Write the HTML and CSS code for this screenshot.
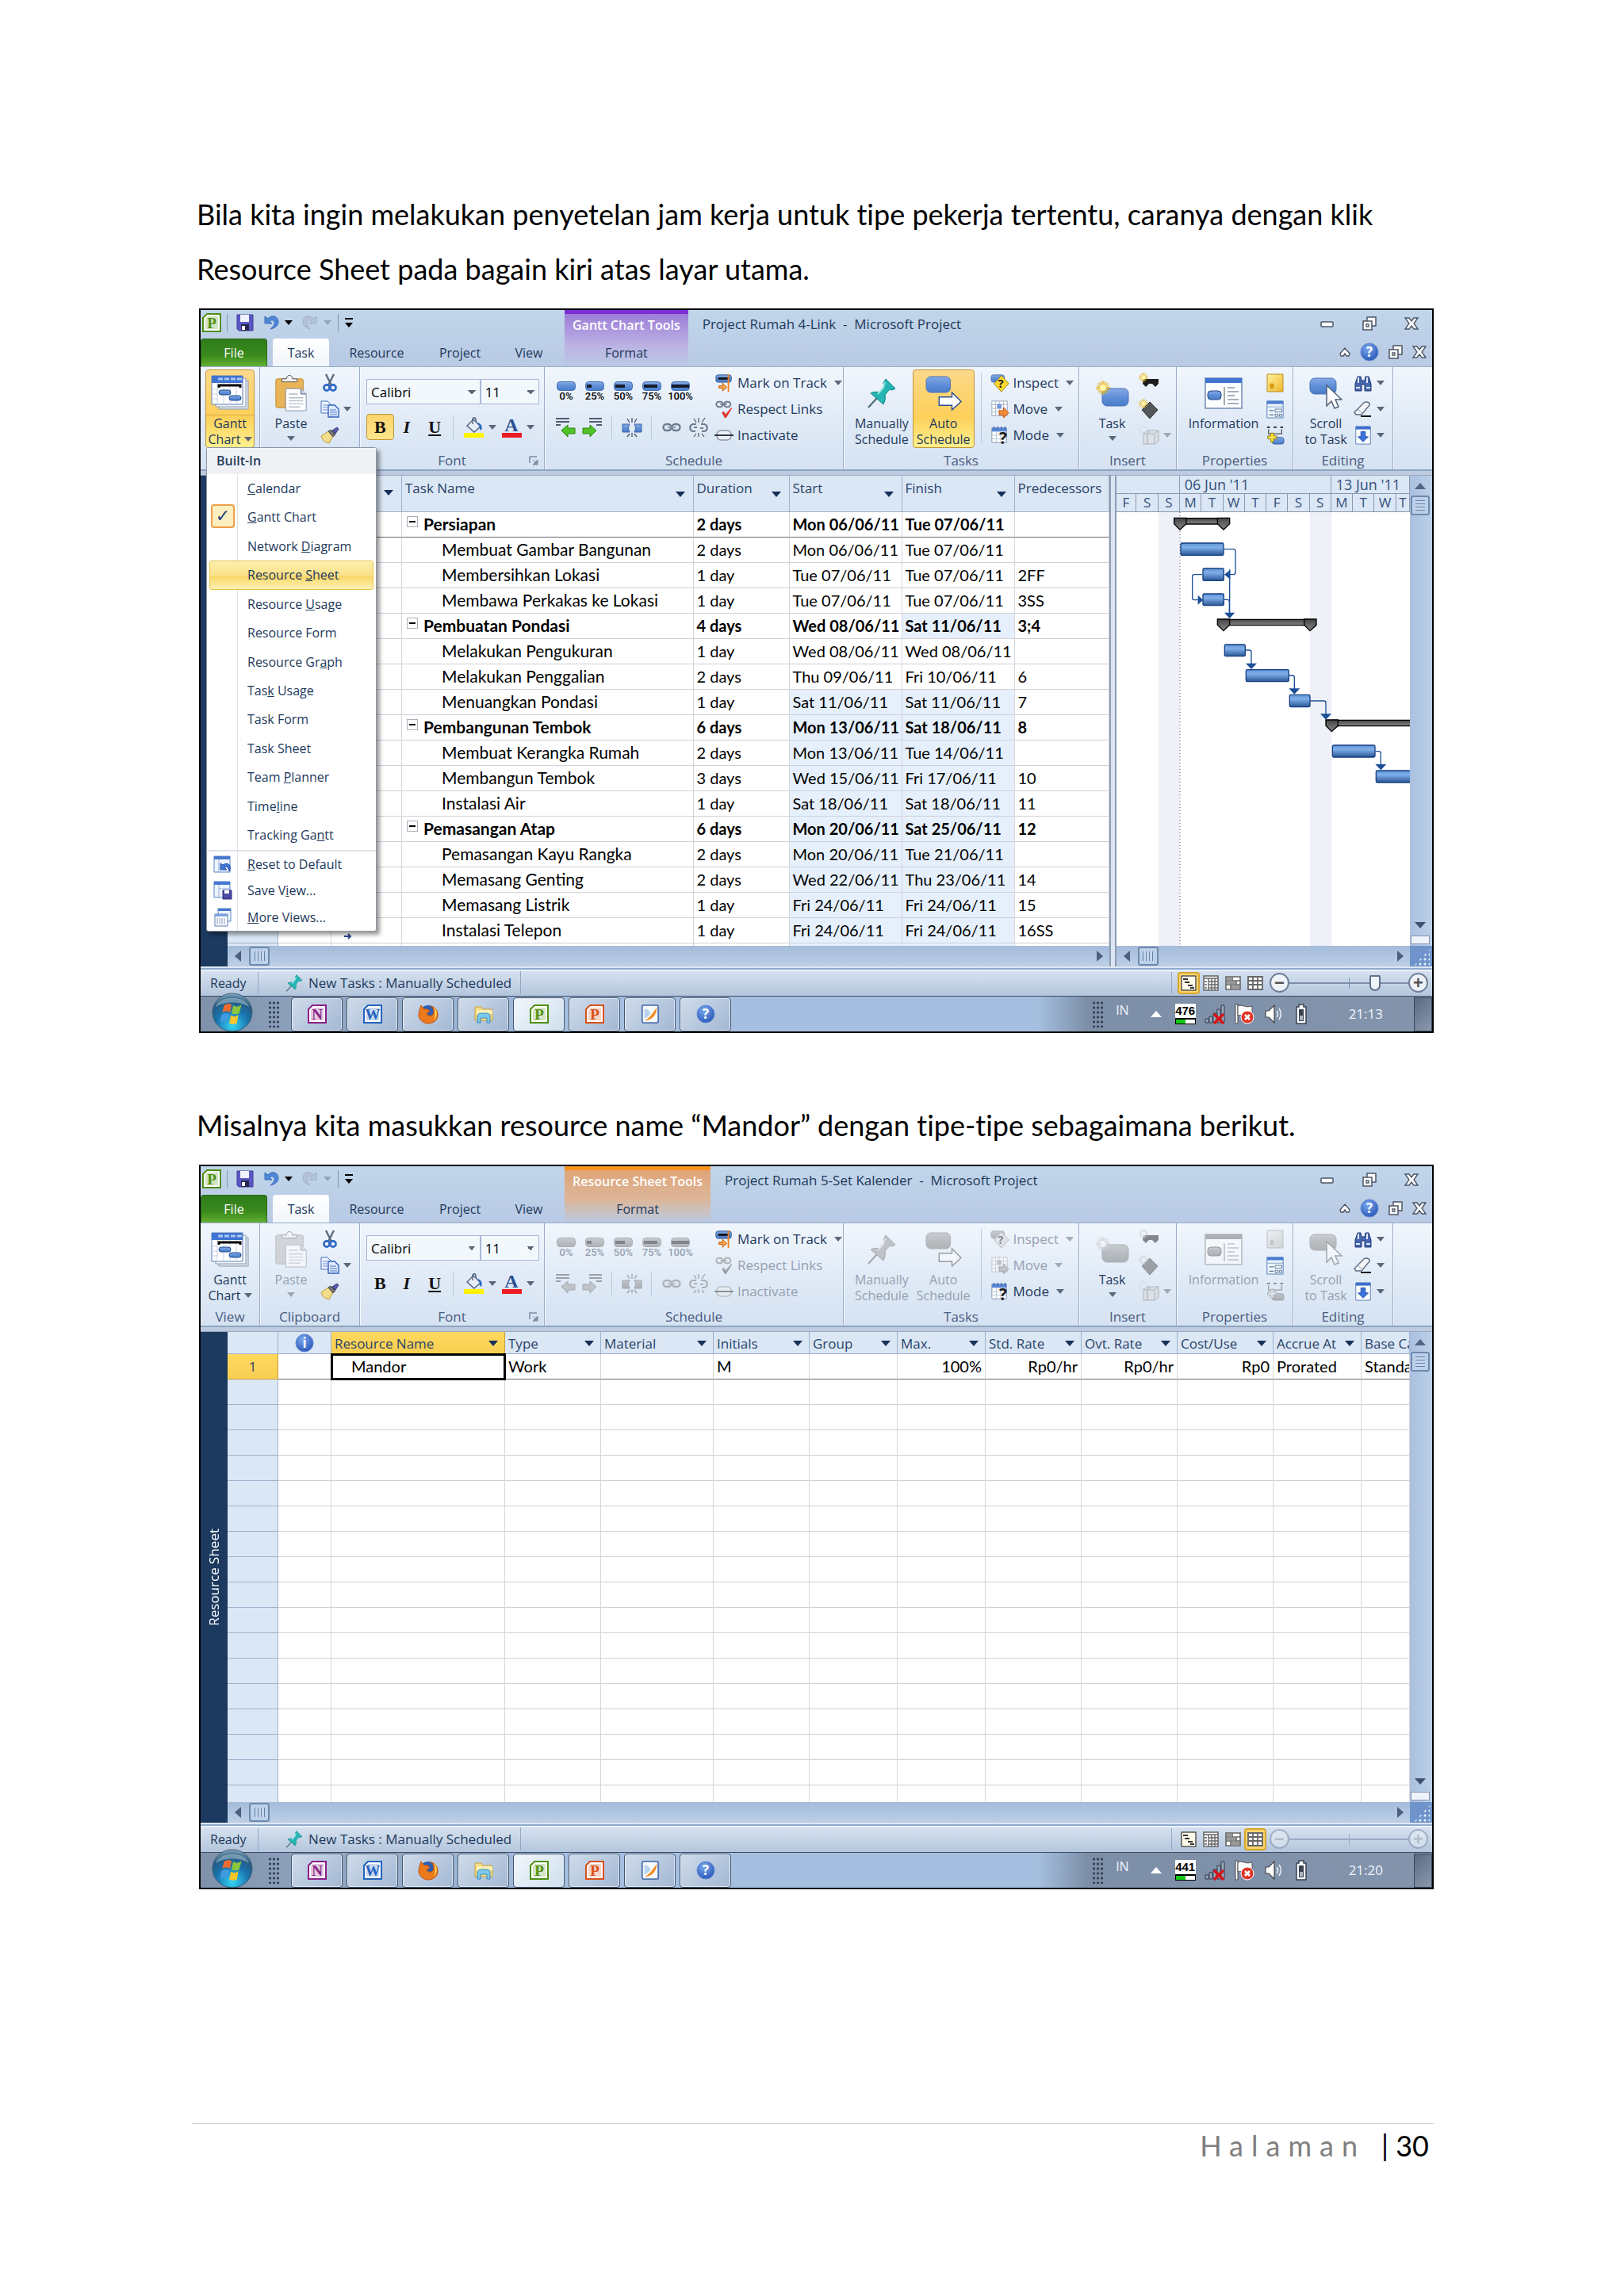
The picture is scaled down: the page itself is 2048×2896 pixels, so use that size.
FILE: index.html
```html
<!DOCTYPE html>
<html lang="id">
<head>
<meta charset="utf-8">
<meta name="viewport" content="width=device-width, initial-scale=1">
<title>Halaman 30</title>
<link rel="stylesheet" href="styles.css">
</head>
<body>
<svg class="sprite" aria-hidden="true">
  <defs>
    <linearGradient id="blue" x2="0" y2="1"><stop offset="0" stop-color="#86aae4"/><stop offset=".5" stop-color="#5f8fd8"/><stop offset="1" stop-color="#4a7cc8"/></linearGradient>
    <linearGradient id="bar" x2="0" y2="1"><stop offset="0" stop-color="#5d92d8"/><stop offset=".35" stop-color="#7fb0ea"/><stop offset="1" stop-color="#2a5596"/></linearGradient>
    <linearGradient id="dark" x2="0" y2="1"><stop offset="0" stop-color="#444"/><stop offset="1" stop-color="#888"/></linearGradient>
    <linearGradient id="gold" x2="1" y2="1"><stop offset="0" stop-color="#fff2a0"/><stop offset="1" stop-color="#efb52c"/></linearGradient>
    <radialGradient id="orb" cx=".5" cy=".85" r=".9"><stop offset="0" stop-color="#35d6f5"/><stop offset=".45" stop-color="#1a75b0"/><stop offset=".75" stop-color="#245a80"/><stop offset="1" stop-color="#a8c4d8"/></radialGradient>
    <radialGradient id="ball" cx=".4" cy=".3" r=".8"><stop offset="0" stop-color="#7aa8ee"/><stop offset="1" stop-color="#2350b4"/></radialGradient>
  </defs>
  <symbol id="frame" viewBox="0 0 24 24"><path d="M6 1h17v22H1V6z" fill="#fff" stroke="currentColor" stroke-width="2"/><path d="M7 4h13v16H4V7z" fill="currentColor" opacity=".25"/></symbol>
  <symbol id="save" viewBox="0 0 22 22"><path d="M1 1h20v20H3l-2-2z" fill="#5a57c4" stroke="#3d3a96"/><path d="M5 1h11v9H5z" fill="#f1f3fc"/><path d="M6 13h10v8H6z" fill="#26264e"/><path d="M7 15h4v5H7z" fill="#fff"/></symbol>
  <symbol id="undo" viewBox="0 0 20 20"><path d="M2 2v9h9L8 8c4-3 7 0 6 4-1 3-3 4-5 6 5-1 10-4 10-9 0-7-8-10-13-4z" fill="#4f86d8" stroke="#3a6cba"/></symbol>
  <symbol id="redo" viewBox="0 0 20 20"><path d="M18 2v9H9l3-3C8 5 5 8 6 12c1 3 3 4 4 6C6 17 1 14 1 9 1 2 9-1 14 5z" fill="#b4c3da" stroke="#9eb0ca"/></symbol>
  <symbol id="gantt" viewBox="0 0 48 44"><path d="M10 7h37v36H10z" fill="#dce4ee" stroke="#8c9ab0"/><path d="M6 4h38v36H6z" fill="#f4f7fb" stroke="#8c9ab0"/><path d="M1 1h39v36H1z" fill="#fff" stroke="#5d7fb8"/><path d="M1 1h39v9H1z" fill="#3f74d0"/><path d="M9 5h30" stroke="#a9c6f4" stroke-width="3" stroke-dasharray="6 2"/><path d="M8 10v27M1 18h7M1 24h7M1 30h7M16 10v27M24 10v27M32 10v27" stroke="#c4d2e8"/><path d="M10 16V13h27v3" fill="none" stroke="#000" stroke-width="3"/><rect x="10" y="19" width="15" height="6" rx="3" fill="url(#blue)" stroke="#204a8c"/><rect x="23" y="26" width="15" height="6" rx="3" fill="url(#blue)" stroke="#204a8c"/></symbol>
  <symbol id="paste" viewBox="0 0 42 48"><rect x="1" y="5" width="36" height="38" rx="2" fill="#e9b457" stroke="#c08a34"/><path d="M9 9V5h6c0-6 8-6 8 0h6v4z" fill="#f1f1f1" stroke="#555"/><path d="M14 18h20l7 7v22H14z" fill="#fff" stroke="#7f8fb0"/><path d="M34 18v7h7" fill="#c7d4ea" stroke="#4a5d88"/><path d="M18 25h12M18 30h19M18 34h19M18 38h19M18 42h15" stroke="#b4bccb" stroke-width="1.4"/></symbol>
  <symbol id="cut" viewBox="0 0 20 24"><path d="M5 1l7 14M15 1L8 15" stroke="#5a6a80" stroke-width="2.4" fill="none"/><circle cx="6" cy="18" r="3.6" fill="none" stroke="#2f68c4" stroke-width="2.6"/><circle cx="14" cy="18" r="3.6" fill="none" stroke="#2f68c4" stroke-width="2.6"/></symbol>
  <symbol id="copy" viewBox="0 0 24 22"><path d="M1 1h8l4 4v11H1z" fill="#eef4ff" stroke="#4470c0"/><path d="M3 6h6M3 9h6M3 12h6" stroke="#6b90d6"/><path d="M10 6h8l5 5v10H10z" fill="#dfeaff" stroke="#3260b8" stroke-width="1.4"/><path d="M12 12h8M12 15h9M12 18h9" stroke="#4876cc"/></symbol>
  <symbol id="brush" viewBox="0 0 24 22"><path d="M1 12l9-6 6 6-5 9C6 20 2 17 1 12z" fill="#f3dc8a" stroke="#b8963a"/><path d="M10 6l3-2 6 6-3 3z" fill="#777" stroke="#444"/><path d="M15 5l6-4 2 2-4 6z" fill="#5c5ca8" stroke="#3a3a80"/></symbol>
  <symbol id="fill" viewBox="0 0 26 26"><path d="M5 11l8-8 9 9-8 7z" fill="#e8eef6" stroke="#4d5f80" stroke-width="1.4"/><path d="M12 9V3c0-3 4-3 4 0v3" fill="none" stroke="#4d5f80" stroke-width="1.4"/><path d="M18 7c5 1 7 5 5 10-2-1-3-3-2-5z" fill="#2f68c4"/><path d="M1 20h25v6H1z" fill="#fff200"/></symbol>
  <symbol id="fontcolor" viewBox="0 0 26 26"><path d="M1 20h25v6H1z" fill="#ed1c24"/></symbol>
  <symbol id="pct" viewBox="0 0 24 12"><rect x=".5" y=".5" width="23" height="11" rx="4" fill="url(#blue)" stroke="#416cb0"/></symbol>
  <symbol id="outdent" viewBox="0 0 26 26"><path d="M1 2h17M1 6h17M1 10h6" stroke="#222c44" stroke-width="1.6"/><path d="M8 17l8-7v4h9v7h-9v4z" fill="#52c326" stroke="#2c8412"/></symbol>
  <symbol id="indent" viewBox="0 0 26 26"><path d="M9 2h16M9 6h16M18 10h7" stroke="#222c44" stroke-width="1.6"/><path d="M18 17l-8-7v4H1v7h9v4z" fill="#52c326" stroke="#2c8412"/></symbol>
  <symbol id="split" viewBox="0 0 26 26"><path d="M1 9h9l-2 5 2 5H1zM25 9h-9l2 5-2 5h9z" fill="url(#blue)" stroke="#3a66ac"/><path d="M13 1v6M7 2l3 5M19 2l-3 5M13 20v5M7 25l3-4M19 25l-3-4" stroke="#4a5468" stroke-width="1.3"/></symbol>
  <symbol id="link" viewBox="0 0 24 12"><rect x="1.500" y="2" width="10" height="8" rx="4" fill="none" stroke="#6f7d90" stroke-width="2.400"/><rect x="12.500" y="2" width="10" height="8" rx="4" fill="none" stroke="#6f7d90" stroke-width="2.400"/><path d="M7 6h10" stroke="#8b98aa" stroke-width="2"/></symbol>
  <symbol id="unlink" viewBox="0 0 24 26"><path d="M9 9H5c-5 1-5 8 0 9h3M15 9h4c5 1 5 8 0 9h-3M6 13h4M14 14h4" fill="none" stroke="#6f7d90" stroke-width="2.200"/><path d="M12 1v6M6 2l3 5M20 1l-4 6M12 20v5M6 25l3-4M19 25l-3-4" stroke="#4a5468" stroke-width="1.200"/></symbol>
  <symbol id="track" viewBox="0 0 24 26"><rect x="1" y="2" width="21" height="10" rx="3" fill="url(#blue)" stroke="#2f528c"/><path d="M4 7h15" stroke="#111" stroke-width="3"/><path d="M18 1v24" stroke="#ef7d1a" stroke-width="2"/><path d="M5 17h5v-4l6 6-6 5v-4H5z" fill="#f9a54a" stroke="#c85a0a"/></symbol>
  <symbol id="respect" viewBox="0 0 24 26"><rect x="1.500" y="3" width="9" height="7" rx="3.500" fill="none" stroke="#6f7d90" stroke-width="2"/><rect x="12" y="3" width="9" height="7" rx="3.500" fill="none" stroke="#6f7d90" stroke-width="2"/><path d="M7 6.500h9" stroke="#6f7d90" stroke-width="2"/><path d="M9 18l3-2 2 4 8-9 1 1-8 13h-2z" fill="#e0362a"/></symbol>
  <symbol id="inactive" viewBox="0 0 24 16"><rect x="3" y="2" width="18" height="12" rx="5" fill="#eef2f8" stroke="#8a94a6" stroke-width="1.500"/><path d="M0 8h24" stroke="#1c2432" stroke-width="1.800"/></symbol>
  <symbol id="pin" viewBox="0 0 36 38"><path d="M1 37l11-12" stroke="#46646e" stroke-width="2"/><path d="M23 1l12 12-4 2-3-1-6 7c1 4 0 8-2 12L4 19c4-2 8-2 11-1l6-7-1-5z" fill="#26b6b4" stroke="#0e8286"/><path d="M22 5l-2 7-7 8" fill="none" stroke="#8fe8e2" stroke-width="2"/></symbol>
  <symbol id="auto" viewBox="0 0 48 46"><rect x="1" y="1" width="32" height="21" rx="6" fill="url(#blue)" stroke="#5277b4"/><path d="M18 28h17v-6l12 12-12 11v-6H18z" fill="#fff" stroke="#2c4f98" stroke-width="1.500"/></symbol>
  <symbol id="inspect" viewBox="0 0 24 26"><rect x="0" y="2" width="18" height="10" rx="3" fill="url(#blue)" stroke="#5277b4"/><path d="M14 3l10 11-10 11L4 14z" fill="#ffd92e" stroke="#9d7b00"/></symbol>
  <symbol id="move" viewBox="0 0 24 26"><path d="M1 2h21v20H1z" fill="#fff" stroke="#98a4b8"/><path d="M1 7h21M1 12h21M1 17h21M6 2v20M11 2v20M17 2v20" stroke="#aab6ca"/><path d="M8 6h6v6H8z" fill="#6f98dc"/><path d="M11 15h6v-4l7 7-7 7v-4h-6z" fill="#f78a3a" stroke="#c2540a"/></symbol>
  <symbol id="mode" viewBox="0 0 24 26"><path d="M1 3h20v20H1z" fill="#fff" stroke="#8090aa"/><path d="M1 3h20v5H1z" fill="#5b88d8"/><path d="M4 1v4M9 1v4M14 1v4M19 1v4" stroke="#3b62ac" stroke-width="1.500"/><path d="M1 13h20M1 18h20M7 8v15M13 8v15" stroke="#b8c4d8"/></symbol>
  <symbol id="star" viewBox="0 0 18 18"><path d="M9 0v18M0 9h18M3 3l12 12M15 3L3 15M6 1l6 16M12 1L6 17M1 6l16 6M1 12l16-6" stroke="#e8b420" stroke-width="1.300"/><circle cx="9" cy="9" r="4" fill="#fff6a8"/></symbol>
  <symbol id="newtask" viewBox="0 0 42 34"><rect x="8" y="11" width="33" height="22" rx="6" fill="url(#blue)" stroke="#4a73b8"/><use href="#star" x="0" y="1" width="18" height="18"/></symbol>
  <symbol id="summary" viewBox="0 0 26 26"><path d="M6 8h19v6l-4 4-4-4H13l-4 4-4-4z" fill="#1c1c1c"/><use href="#star" x="0" y="0" width="12" height="12"/></symbol>
  <symbol id="milestone" viewBox="0 0 26 26"><path d="M14 4l10 10-10 11L4 14z" fill="#55565a" stroke="#333"/><use href="#star" x="0" y="0" width="12" height="12"/></symbol>
  <symbol id="deliver" viewBox="0 0 26 26"><path d="M6 11l5-4h14v13l-5 4H6zM6 11h14v13M20 11l5-4" fill="#d8dde4" stroke="#98a0ac" stroke-width="1.400"/><path d="M11 11v13M14 7l-3 4" stroke="#98a0ac" stroke-width="2"/><use href="#star" x="0" y="0" width="12" height="12" opacity=".5"/></symbol>
  <symbol id="info" viewBox="0 0 48 40"><path d="M1 1h46v38H1z" fill="#fdfeff" stroke="#7089b4" stroke-width="1.500"/><path d="M1 1h46v6H1z" fill="#3f74d0"/><rect x="4" y="17" width="17" height="11" rx="4" fill="url(#blue)" stroke="#24467e"/><path d="M25 12v23" stroke="#555"/><path d="M29 13h9M29 18h14M29 23h9M29 28h14M29 33h14" stroke="#8c97aa" stroke-width="1.500"/></symbol>
  <symbol id="note" viewBox="0 0 24 24"><path d="M2 1h20v22H2z" fill="url(#gold)" stroke="#b98d1c"/><path d="M5 14c5-4 7 1 5 5l-4 1z" fill="#d89a14"/></symbol>
  <symbol id="details" viewBox="0 0 24 26"><path d="M1 2h22v23H1z" fill="#eef5fc" stroke="#4f77b8"/><path d="M1 2h22v4H1z" fill="#4a7bd2"/><path d="M1 10h22" stroke="#7f9cc4"/><path d="M4 15h6M4 21h6" stroke="#5c7594" stroke-width="1.500"/><path d="M12 13h9v4h-9zM12 20h4v3h-4zM18 20h3v3h-3z" fill="none" stroke="#5c7594"/></symbol>
  <symbol id="timeline" viewBox="0 0 24 26"><path d="M1 2h22" stroke="#222" stroke-width="2" stroke-dasharray="4 5"/><path d="M3 5v6h18V5" fill="none" stroke="#555" stroke-width="1.400"/><rect x="8" y="16" width="16" height="9" rx="3" fill="url(#blue)" stroke="#34609e"/><path d="M6 10h4v4h4v4h-4v4H6v-4H2v-4h4z" fill="#ffe23c" stroke="#8c7410"/></symbol>
  <symbol id="scroll" viewBox="0 0 42 40"><rect x="1" y="1" width="33" height="20" rx="6" fill="url(#blue)" stroke="#4a73b8"/><path d="M22 10v26l6-6 4 9 5-2-4-9h8z" fill="#fff" stroke="#52607a" stroke-width="1.500"/></symbol>
  <symbol id="find" viewBox="0 0 24 24"><path d="M2 22v-9l3-9h4l1 5h4l1-5h4l3 9v9h-8v-8h-4v8z" fill="#4467b0" stroke="#20366e"/><path d="M3 18h5M16 18h5M6 5v7M17 5v7" stroke="#dfe8f8" stroke-width="2"/></symbol>
  <symbol id="erase" viewBox="0 0 24 22"><path d="M1 15L13 3c2-2 8-1 7 3L10 18H3z" fill="#f3f5f9" stroke="#5d6b82" stroke-width="1.400"/><path d="M5 11l7 6" stroke="#8d98aa"/><path d="M9 20h13" stroke="#111" stroke-width="2"/></symbol>
  <symbol id="down" viewBox="0 0 22 26"><path d="M1 1h20v24H1z" fill="#fff" stroke="#5579b6"/><path d="M1 1h20v4H1z" fill="#3e6fd0"/><path d="M8 8h6v7h4l-7 7-7-7h4z" fill="#3b72dc" stroke="#1e4aa8"/></symbol>
  <symbol id="launch" viewBox="0 0 12 12"><path d="M1 9V1h9" fill="none" stroke="#7d8ca6" stroke-width="1.500"/><path d="M5 5l4 4M11 5v6H5z" fill="#7d8ca6" stroke="#7d8ca6"/></symbol>
  <symbol id="min" viewBox="0 0 18 18"><rect x="1" y="7" width="15" height="6" rx="1" fill="#fff" stroke="#4c5666" stroke-width="1.500"/></symbol>
  <symbol id="restore" viewBox="0 0 18 18"><path d="M6 1h11v11H6z" fill="#fff" stroke="#4c5666" stroke-width="1.500"/><path d="M1 6h11v11H1z" fill="#fff" stroke="#4c5666" stroke-width="1.500"/><path d="M5 10h3v3H5z" fill="#fff" stroke="#4c5666" stroke-width="1.300"/></symbol>
  <symbol id="close" viewBox="0 0 18 16"><path d="M1 1h5l3 4 3-4h5l-5 7 5 7h-5l-3-4-3 4H1l5-7z" fill="#fff" stroke="#4c5666" stroke-width="1.400"/></symbol>
  <symbol id="up" viewBox="0 0 14 12"><path d="M1 8l6-7 6 7-1 3H9L7 8l-2 3H2z" fill="#fff" stroke="#4c5666" stroke-width="1.400"/></symbol>
  <symbol id="disc" viewBox="0 0 24 24"><circle cx="12" cy="12" r="11" fill="url(#ball)" stroke="#5d86d2"/></symbol>
  <symbol id="orbi" viewBox="0 0 54 52"><ellipse cx="27" cy="27" rx="26" ry="25" fill="url(#orb)" stroke="#3c5a74"/><path d="M16 18c4-3 7-3 10-1l-2 10c-3-2-6-2-10 0z" fill="#ee6a2c"/><path d="M28 18c4 2 7 2 11-1l-3 11c-4 2-7 2-10 0z" fill="#8cc63e"/><path d="M13 30c4-3 7-2 10 0l-2 10c-3-2-6-2-10 0z" fill="#3f9be0"/><path d="M25 31c4 2 7 2 10-1l-2 11c-4 2-7 2-10 0z" fill="#fcc52c"/><path d="M5 20C10 4 44 4 49 20 38 12 16 12 5 20z" fill="#fff" opacity=".35"/></symbol>
  <symbol id="fox" viewBox="0 0 26 26"><circle cx="13" cy="13" r="11" fill="#2b5fb4"/><path d="M2 8l2-6 4 5c3-1 6 0 7 3l-4 2c1 5 9 4 9-2 0-4-2-6-4-7 6 1 9 6 9 11 0 7-6 11-12 11S1 20 1 14z" fill="#ec7a1c" stroke="#c4520e"/><path d="M20 4c5 4 5 12 0 17 2-5 2-12 0-17z" fill="#ffd24a"/></symbol>
  <symbol id="folder" viewBox="0 0 26 26"><path d="M2 4h8l2 3h12v14H2z" fill="#f4dd84" stroke="#c4a040"/><path d="M4 8h20v5H4z" fill="#fbf1b8"/><path d="M5 24v-8c0-3 3-4 5-4h6c3 0 5 1 5 4v8h-4v-6H9v6z" fill="#7cc8ee" stroke="#3c88b8"/></symbol>
  <symbol id="swoosh" viewBox="0 0 24 26"><rect x="1" y="1" width="22" height="24" rx="2" fill="#f6f8fb" stroke="#4d75b0" stroke-width="2"/><path d="M4 22C12 18 15 12 21 4c0 10-6 17-17 18z" fill="#f08c1c"/><path d="M4 6c5 0 8 3 8 7-3 3-5 5-8 6z" fill="#b9d3ee"/></symbol>
  <symbol id="signal" viewBox="0 0 26 26"><path d="M1 19h4v5H1zM6 16h4v8H6zM11 12h4v12h-4zM16 7h4v17h-4zM21 2h4v22h-4z" fill="#9aa8bc" stroke="#2e3a4c"/><path d="M12 13l12 12M24 13L12 25" stroke="#d81418" stroke-width="3.500"/></symbol>
  <symbol id="flag" viewBox="0 0 26 26"><path d="M2 1h3v24H2z" fill="#fff" stroke="#444"/><path d="M5 3c6-3 8 3 18 0v12c-8 2-12-2-18 0z" fill="#fff" stroke="#555"/><circle cx="17" cy="17" r="8" fill="#e03428" stroke="#fff"/><path d="M14 14l6 6M20 14l-6 6" stroke="#fff" stroke-width="2.600"/></symbol>
  <symbol id="sound" viewBox="0 0 22 24"><path d="M2 8h4l7-7v22l-7-7H2z" fill="#fff" stroke="#444" stroke-width="1.200"/><path d="M16 8c2 2 2 6 0 8M19 5c3 4 3 10 0 14" fill="none" stroke="#e8eef6" stroke-width="1.600"/></symbol>
  <symbol id="battery" viewBox="0 0 16 26"><path d="M5 1h6v3h3v21H2V4h3z" fill="#fff" stroke="#39424f" stroke-width="1.500"/><path d="M5 7h6v15H5z" fill="#39424f"/><path d="M6 15h4v6H6z" fill="#aab4c2"/></symbol>
  <symbol id="v1" viewBox="0 0 20 20"><path d="M1 1h18v18H1z" fill="#fffbe8" stroke="#555" stroke-width="1.500"/><path d="M3 5h6M5 9h6M9 13h6M12 16h5" stroke="#333" stroke-width="2"/></symbol>
  <symbol id="v2" viewBox="0 0 20 20"><path d="M1 1h18v18H1z" fill="#fff" stroke="#666" stroke-width="1.500"/><path d="M1 4h18M7 8h12M7 12h12M7 16h12M7 4v15M11 4v15M15 4v15M2 8h3M2 12h3M2 16h3" stroke="#666" stroke-width="1.400"/></symbol>
  <symbol id="v3" viewBox="0 0 20 20"><path d="M1 2h18v16H1zM1 7h18M1 12h18M9 2v5M14 7v5M7 12v6" fill="#fff" stroke="#666" stroke-width="1.600"/><path d="M2 3h7v3H2zM2 8h11v3H2zM8 13h10v4H8z" fill="#999"/></symbol>
  <symbol id="v4" viewBox="0 0 20 20"><path d="M1 2h18v16H1zM1 7h18M1 12h18M7 2v16M13 2v16" fill="#fff" stroke="#666" stroke-width="1.800"/></symbol>
  <symbol id="m1" viewBox="0 0 24 22"><path d="M1 1h20v20H1z" fill="#eef4fc" stroke="#5b84c8"/><path d="M1 1h20v4H1z" fill="#4678d0"/><path d="M7 5v16" stroke="#8fb0e0"/><path d="M9 10v8h8l-3-3c3-2 5 0 6 5 4-6-1-13-8-8z" fill="#3f78d8" stroke="#2450a4"/></symbol>
  <symbol id="m2" viewBox="0 0 24 24"><path d="M1 1h20v20H1z" fill="#eef4fc" stroke="#5b84c8"/><path d="M1 1h20v4H1z" fill="#4678d0"/><path d="M7 5v16M7 10h14" stroke="#8fb0e0"/><path d="M12 12h11v11H12z" fill="#4a4aa4" stroke="#2f2f7c"/><path d="M14 12h6v4h-6z" fill="#fff"/></symbol>
  <symbol id="m3" viewBox="0 0 22 24"><path d="M5 1h16v16H5z" fill="#eef4fc" stroke="#5b84c8"/><path d="M5 1h16v3H5z" fill="#4678d0"/><path d="M1 8h16v15H1z" fill="#fff" stroke="#5b7cb4"/><path d="M1 8h16v3H1z" fill="#7fa2de"/><path d="M4 13v8M7 13v8M10 13v8M13 13v8" stroke="#8094b8"/></symbol>
</svg>

<main class="page">
<p class="text">Bila kita ingin melakukan penyetelan jam kerja untuk tipe pekerja tertentu, caranya dengan klik<br>Resource Sheet pada bagain kiri atas layar utama.</p>

<section class="window" aria-label="Project Rumah 4-Link">
  <header class="top">
    <div class="quick">
      <svg class="i24 green"><use href="#frame"/><text class="letter" x="12" y="19">P</text></svg><span class="bar"></span>
      <button aria-label="Save"><svg class="i22"><use href="#save"/></svg></button>
      <button class="pair" aria-label="Undo"><svg class="i20"><use href="#undo"/></svg><i class="caret black"></i></button>
      <button class="pair" aria-label="Redo"><svg class="i20"><use href="#redo"/></svg><i class="caret faint"></i></button><span class="bar"></span>
      <button class="more" aria-label="Customize"><i class="caret black"></i></button>
    </div>
    <nav class="tabs"><button class="file">File</button><button class="tab on">Task</button><button class="tab res">Resource</button><button class="tab prj">Project</button><button class="tab vw">View</button></nav>
    <div class="context purple-tab"><b>Gantt Chart Tools</b><button class="tab">Format</button></div>
    <div class="title"><h2>Project Rumah 4-Link&nbsp; -&nbsp; Microsoft Project</h2><span class="wincon"><button aria-label="Minimize"><svg class="i18"><use href="#min"/></svg></button><button aria-label="Restore"><svg class="i18"><use href="#restore"/></svg></button><button aria-label="Close"><svg class="i18"><use href="#close"/></svg></button></span></div>
    <div class="doccon"><button aria-label="Collapse ribbon"><svg class="i14"><use href="#up"/></svg></button><button aria-label="Help"><svg class="i24"><use href="#disc"/><text class="mark white" x="12" y="18">?</text></svg></button><button aria-label="Restore document"><svg class="i18"><use href="#restore"/></svg></button><button aria-label="Close document"><svg class="i18"><use href="#close"/></svg></button></div>
  </header>
  <div class="ribbon">
    <div class="group g-view"><div class="tools"><button class="big on split-btn"><span class="pic"><svg class="w48"><use href="#gantt"/></svg></span><span>Gantt<br>Chart<i class="caret"></i></span></button></div></div>
    <div class="group g-clip"><div class="tools"><button class="big"><span class="pic"><svg class="w42"><use href="#paste"/></svg></span><span>Paste</span><i class="caret"></i></button>
      <div class="stack"><button aria-label="Cut"><svg class="i24"><use href="#cut"/></svg></button><button aria-label="Copy"><svg class="i24"><use href="#copy"/></svg><i class="caret"></i></button><button aria-label="Format Painter"><svg class="i24"><use href="#brush"/></svg></button></div></div></div>
    <div class="group g-font"><div class="tools col"><div class="row combos"><select class="face" aria-label="Font"><option>Calibri</option></select><select class="size" aria-label="Font size"><option>11</option></select></div>
      <div class="row"><button class="fmt b on">B</button><button class="fmt it">I</button><button class="fmt u">U</button><span class="bar"></span><button class="color" aria-label="Background color"><svg class="i26"><use href="#fill"/></svg><i class="caret"></i></button><button class="color" aria-label="Font color"><svg class="i26"><use href="#fontcolor"/><text class="glyph" x="13" y="18">A</text></svg><i class="caret"></i></button></div></div><h3>Font</h3><button class="launcher" aria-label="Font dialog"><svg class="i12"><use href="#launch"/></svg></button></div>
    <div class="group g-sched"><div class="tools"><div class="col"><div class="row combos">
      <button class="pct"><svg><use href="#pct"/></svg>0%</button><button class="pct"><svg><use href="#pct"/><path class="prog" d="M2 6h6"/></svg>25%</button><button class="pct"><svg><use href="#pct"/><path class="prog" d="M2 6h12"/></svg>50%</button><button class="pct"><svg><use href="#pct"/><path class="prog" d="M2 6h17"/></svg>75%</button><button class="pct"><svg><use href="#pct"/><path class="prog" d="M1 6h22"/></svg>100%</button></div>
      <div class="row icons"><button aria-label="Outdent"><svg class="i26"><use href="#outdent"/></svg></button><button aria-label="Indent"><svg class="i26"><use href="#indent"/></svg></button><span class="bar"></span><button aria-label="Split Task"><svg class="i26"><use href="#split"/></svg></button><span class="bar"></span><button aria-label="Link"><svg class="i24"><use href="#link"/></svg></button><button aria-label="Unlink"><svg class="i26"><use href="#unlink"/></svg></button></div></div>
      <div class="stack wide"><button><svg class="i24"><use href="#track"/></svg>Mark on Track<i class="caret"></i></button><button><svg class="i24"><use href="#respect"/></svg>Respect Links</button><button><svg class="i24"><use href="#inactive"/></svg>Inactivate</button></div></div><h3>Schedule</h3></div>
    <div class="group g-tasks"><div class="tools"><button class="big"><span class="pic"><svg class="w36"><use href="#pin"/></svg></span><span>Manually<br>Schedule</span></button><button class="big on"><span class="pic"><svg class="w48"><use href="#auto"/></svg></span><span>Auto<br>Schedule</span></button><span class="bar tall"></span>
      <div class="stack wide"><button><svg class="i24"><use href="#inspect"/><text class="mark" x="13" y="18">?</text></svg>Inspect<i class="caret"></i></button><button><svg class="i24"><use href="#move"/></svg>Move<i class="caret"></i></button><button><svg class="i24"><use href="#mode"/><text class="mark large" x="16" y="23">?</text></svg>Mode<i class="caret"></i></button></div></div><h3>Tasks</h3></div>
    <div class="group g-insert"><div class="tools"><button class="big"><span class="pic"><svg class="w42"><use href="#newtask"/></svg></span><span>Task</span><i class="caret"></i></button>
      <div class="stack"><button aria-label="Summary"><svg class="i26"><use href="#summary"/></svg></button><button aria-label="Milestone"><svg class="i26"><use href="#milestone"/></svg></button><button aria-label="Deliverable" disabled><svg class="i26"><use href="#deliver"/></svg><i class="caret"></i></button></div></div><h3>Insert</h3></div>
    <div class="group g-prop"><div class="tools"><button class="big"><span class="pic"><svg class="w48"><use href="#info"/></svg></span><span>Information</span></button>
      <div class="stack"><button aria-label="Notes"><svg class="i24"><use href="#note"/></svg></button><button aria-label="Details"><svg class="i24"><use href="#details"/></svg></button><button aria-label="Add to Timeline"><svg class="i24"><use href="#timeline"/></svg></button></div></div><h3>Properties</h3></div>
    <div class="group g-edit"><div class="tools"><button class="big"><span class="pic"><svg class="w42"><use href="#scroll"/></svg></span><span>Scroll<br>to Task</span></button>
      <div class="stack"><button aria-label="Find"><svg class="i24"><use href="#find"/></svg><i class="caret"></i></button><button aria-label="Clear"><svg class="i24"><use href="#erase"/></svg><i class="caret"></i></button><button aria-label="Fill"><svg class="i24"><use href="#down"/></svg><i class="caret"></i></button></div></div><h3>Editing</h3></div>
  </div>
  <div class="band"></div>
  <div class="work gantt-work">
    <div class="side"></div>
    <div class="pane">
      <table class="tasks">
        <colgroup><col class="c63"><col class="c68"><col class="c88"><col><col class="c121"><col class="c142"><col class="c142"><col class="c119"></colgroup>
        <thead><tr><th></th><th></th><th><div><span></span><i class="caret navy"></i></div></th><th><div>Task Name<i class="caret navy"></i></div></th><th><div>Duration<i class="caret navy"></i></div></th><th><div>Start<i class="caret navy"></i></div></th><th><div>Finish<i class="caret navy"></i></div></th><th><div>Predecessors</div></th></tr></thead>
        <tbody>
        <tr class="sum first"><th><td><td><td><button class="tog" aria-label="Collapse"></button>Persiapan<td>2 days<td>Mon 06/06/11<td>Tue 07/06/11<td></tr>
        <tr><th><td><td><td>Membuat Gambar Bangunan<td>2 days<td>Mon 06/06/11<td>Tue 07/06/11<td></tr>
        <tr><th><td><td><td>Membersihkan Lokasi<td>1 day<td>Tue 07/06/11<td>Tue 07/06/11<td>2FF</tr>
        <tr><th><td><td><td>Membawa Perkakas ke Lokasi<td>1 day<td>Tue 07/06/11<td>Tue 07/06/11<td>3SS</tr>
        <tr class="sum"><th><td><td><td><button class="tog" aria-label="Collapse"></button>Pembuatan Pondasi<td>4 days<td>Wed 08/06/11<td class="ch">Sat 11/06/11<td>3;4</tr>
        <tr><th><td><td><td>Melakukan Pengukuran<td>1 day<td>Wed 08/06/11<td>Wed 08/06/11<td></tr>
        <tr><th><td><td><td>Melakukan Penggalian<td>2 days<td>Thu 09/06/11<td>Fri 10/06/11<td>6</tr>
        <tr><th><td><td><td>Menuangkan Pondasi<td>1 day<td class="ch">Sat 11/06/11<td class="ch">Sat 11/06/11<td>7</tr>
        <tr class="sum"><th><td><td><td><button class="tog" aria-label="Collapse"></button>Pembangunan Tembok<td>6 days<td class="ch">Mon 13/06/11<td class="ch">Sat 18/06/11<td>8</tr>
        <tr><th><td><td><td>Membuat Kerangka Rumah<td>2 days<td class="ch">Mon 13/06/11<td class="ch">Tue 14/06/11<td></tr>
        <tr><th><td><td><td>Membangun Tembok<td>3 days<td class="ch">Wed 15/06/11<td class="ch">Fri 17/06/11<td>10</tr>
        <tr><th><td><td><td>Instalasi Air<td>1 day<td class="ch">Sat 18/06/11<td class="ch">Sat 18/06/11<td>11</tr>
        <tr class="sum"><th><td><td><td><button class="tog" aria-label="Collapse"></button>Pemasangan Atap<td>6 days<td class="ch">Mon 20/06/11<td class="ch">Sat 25/06/11<td>12</tr>
        <tr><th><td><td><td>Pemasangan Kayu Rangka<td>2 days<td class="ch">Mon 20/06/11<td class="ch">Tue 21/06/11<td></tr>
        <tr><th><td><td><td>Memasang Genting<td>2 days<td class="ch">Wed 22/06/11<td class="ch">Thu 23/06/11<td>14</tr>
        <tr><th><td><td><td>Memasang Listrik<td>1 day<td class="ch">Fri 24/06/11<td class="ch">Fri 24/06/11<td>15</tr>
        <tr><th><td><td class="modecell"><svg class="i20" viewBox="0 0 20 20"><path d="M6 14h8M11 11l3 3-3 3" fill="none" stroke="#2c4a8c" stroke-width="2"/></svg><td>Instalasi Telepon<td>1 day<td class="ch">Fri 24/06/11<td class="ch">Fri 24/06/11<td>16SS</tr>
        <tr><th><td><td><td><td><td class="ch"><td class="ch"><td></tr>
        </tbody>
      </table>
    </div>
    <div class="splitter"></div>
    <div class="chart">
      <div class="weeks"><span></span><span>06 Jun '11</span><span>13 Jun '11</span></div>
      <div class="days"><span>F</span><span>S</span><span>S</span><span>M</span><span>T</span><span>W</span><span>T</span><span>F</span><span>S</span><span>S</span><span>M</span><span>T</span><span>W</span><span>T</span></div>
      <svg class="bars" viewBox="52 170 1112 1641" preserveAspectRatio="xMinYMin slice" role="img" aria-label="Gantt bars">
        <path d="M211 170h82v1641h-82zM784 170h82v1641h-82z" fill="#eff1f8"/>
        <path d="M292 170v1641" stroke="#555" stroke-width="3" stroke-dasharray="3 9"/>
        <g fill="url(#dark)" stroke="#000" stroke-width="4">
          <path d="M292 193h165v22H292z"/><path d="M270 192h46v22l-24 22-22-22zM434 192h46v22l-23 22-23-22z"/>
          <path d="M457 576h327v22H457z"/><path d="M434 575h46v22l-23 22-23-22zM762 575h46v22l-24 22-22-22z"/>
          <path d="M866 957h330v22H866z"/><path d="M844 956h46v22l-24 22-22-22z"/>
        </g>
        <g fill="url(#bar)" stroke="#163f80" stroke-width="4">
          <rect x="295" y="287" width="162" height="46" rx="5"/><rect x="379" y="383" width="79" height="46" rx="5"/><rect x="379" y="479" width="79" height="44" rx="5"/>
          <rect x="461" y="671" width="78" height="44" rx="5"/><rect x="542" y="766" width="162" height="45" rx="5"/><rect x="707" y="861" width="77" height="46" rx="5"/>
          <rect x="869" y="1052" width="161" height="45" rx="5"/><rect x="1034" y="1148" width="200" height="45" rx="5"/>
        </g>
        <g fill="none" stroke="#1c4f98" stroke-width="4">
          <path d="M459 310h35q8 0 8 8v80q0 8-8 8h-14M377 406h-30q-8 0-8 8v80q0 8 8 8h20M459 501h12q8 0 8 8v44M480 387v170M541 692h13q8 0 8 8v46M706 788h11q8 0 8 8v44M786 884h50q8 0 8 8v44M1032 1075h12q8 0 8 8v44"/>
        </g>
        <path d="M482 388v36l-22-18zM360 484v36l20-18zM460 550h40l-20 22zM541 742h42l-21 22zM704 837h42l-21 22zM823 933h42l-21 22zM1031 1124h42l-21 22z" fill="#1c4f98"/>
      </svg>
    </div>
    <div class="vscroll"><i class="tri up"></i><i class="thumb v"></i><i class="tri dn"></i><i class="knob"></i></div>
    <div class="hscroll left"><i class="tri lf"></i><i class="thumb h"></i><i class="tri rt"></i></div>
    <div class="splitter low"></div>
    <div class="hscroll"><i class="tri lf"></i><i class="thumb h"></i><i class="tri rt"></i></div>
    <div class="corner"></div>
  </div>
  <div class="menu" role="menu">
    <h4>Built-In</h4>
    <div class="list">
      <button role="menuitem"><span><u>C</u>alendar</span></button><button role="menuitem"><i class="tick">✓</i><span><u>G</u>antt Chart</span></button><button role="menuitem"><span>Network <u>D</u>iagram</span></button><button role="menuitem" class="hot"><span>Resource <u>S</u>heet</span></button><button role="menuitem"><span>Resource <u>U</u>sage</span></button><button role="menuitem"><span>Resource Form</span></button><button role="menuitem"><span>Resource Gr<u>a</u>ph</span></button><button role="menuitem"><span>Tas<u>k</u> Usage</span></button><button role="menuitem"><span>Task Form</span></button><button role="menuitem"><span>Task Sheet</span></button><button role="menuitem"><span>Team <u>P</u>lanner</span></button><button role="menuitem"><span>Time<u>l</u>ine</span></button><button role="menuitem"><span>Tracking Ga<u>n</u>tt</span></button>
    </div>
    <div class="list short">
      <button role="menuitem"><svg class="i24"><use href="#m1"/></svg><span><u>R</u>eset to Default</span></button><button role="menuitem"><svg class="i24"><use href="#m2"/></svg><span>Save V<u>i</u>ew...</span></button><button role="menuitem"><svg class="i24"><use href="#m3"/></svg><span><u>M</u>ore Views...</span></button>
    </div>
  </div>
  <div class="edge"></div>
  <footer class="status"><span class="ready">Ready</span><span class="newtasks"><svg class="i22"><use href="#pin"/></svg>New Tasks : Manually Scheduled<span class="rule"></span></span><span class="views"><button class="on" aria-label="Gantt view"><svg class="i20"><use href="#v1"/></svg></button><button aria-label="Usage view"><svg class="i20"><use href="#v2"/></svg></button><button aria-label="Planner view"><svg class="i20"><use href="#v3"/></svg></button><button aria-label="Sheet view"><svg class="i20"><use href="#v4"/></svg></button></span><span class="zoom"><button class="round" aria-label="Zoom out">−</button><input type="range" aria-label="Zoom" min="0" max="100" value="74"><button class="round" aria-label="Zoom in">+</button></span></footer>
  <div class="taskbar">
    <button class="start" aria-label="Start"><svg><use href="#orbi"/></svg></button><span class="grip"></span>
    <div class="apps"><button aria-label="OneNote"><svg class="i24 purple"><use href="#frame"/><text class="letter" x="12" y="19">N</text></svg></button><button aria-label="Word"><svg class="i24 blue"><use href="#frame"/><text class="letter" x="12" y="19">W</text></svg></button><button aria-label="Firefox"><svg class="i26"><use href="#fox"/></svg></button><button aria-label="Explorer"><svg class="i26"><use href="#folder"/></svg></button><button class="cur" aria-label="Project"><svg class="i24 green"><use href="#frame"/><text class="letter" x="12" y="19">P</text></svg></button><button aria-label="PowerPoint"><svg class="i24 orange"><use href="#frame"/><text class="letter" x="12" y="19">P</text></svg></button><button aria-label="Viewer"><svg class="i24"><use href="#swoosh"/></svg></button><button aria-label="Help"><svg class="i24"><use href="#disc"/><text class="mark white" x="12" y="18">?</text></svg></button></div>
    <div class="tray"><span class="grip"></span><span class="lang">IN</span><i class="tri up white"></i><span class="meter">476</span><svg class="i26"><use href="#signal"/></svg><svg class="i26"><use href="#flag"/></svg><svg class="i24"><use href="#sound"/></svg><svg class="i26"><use href="#battery"/></svg><time>21:13</time><button class="peek" aria-label="Show desktop"></button></div>
  </div>
</section>

<p class="text second">Misalnya kita masukkan resource name “Mandor” dengan tipe-tipe sebagaimana berikut.</p>

<section class="window" aria-label="Project Rumah 5-Set Kalender">
  <header class="top">
    <div class="quick">
      <svg class="i24 green"><use href="#frame"/><text class="letter" x="12" y="19">P</text></svg><span class="bar"></span>
      <button aria-label="Save"><svg class="i22"><use href="#save"/></svg></button>
      <button class="pair" aria-label="Undo"><svg class="i20"><use href="#undo"/></svg><i class="caret black"></i></button>
      <button class="pair" aria-label="Redo"><svg class="i20"><use href="#redo"/></svg><i class="caret faint"></i></button><span class="bar"></span>
      <button class="more" aria-label="Customize"><i class="caret black"></i></button>
    </div>
    <nav class="tabs"><button class="file">File</button><button class="tab on">Task</button><button class="tab res">Resource</button><button class="tab prj">Project</button><button class="tab vw">View</button></nav>
    <div class="context orange-tab"><b>Resource Sheet Tools</b><button class="tab">Format</button></div>
    <div class="title"><h2>Project Rumah 5-Set Kalender&nbsp; -&nbsp; Microsoft Project</h2><span class="wincon"><button aria-label="Minimize"><svg class="i18"><use href="#min"/></svg></button><button aria-label="Restore"><svg class="i18"><use href="#restore"/></svg></button><button aria-label="Close"><svg class="i18"><use href="#close"/></svg></button></span></div>
    <div class="doccon"><button aria-label="Collapse ribbon"><svg class="i14"><use href="#up"/></svg></button><button aria-label="Help"><svg class="i24"><use href="#disc"/><text class="mark white" x="12" y="18">?</text></svg></button><button aria-label="Restore document"><svg class="i18"><use href="#restore"/></svg></button><button aria-label="Close document"><svg class="i18"><use href="#close"/></svg></button></div>
  </header>
  <div class="ribbon">
    <div class="group g-view"><div class="tools"><button class="big"><span class="pic"><svg class="w48"><use href="#gantt"/></svg></span><span>Gantt<br>Chart<i class="caret"></i></span></button></div><h3>View</h3></div>
    <div class="group g-clip"><div class="tools"><button class="big" disabled><span class="pic"><svg class="w42"><use href="#paste"/></svg></span><span>Paste</span><i class="caret"></i></button>
      <div class="stack"><button aria-label="Cut"><svg class="i24"><use href="#cut"/></svg></button><button aria-label="Copy"><svg class="i24"><use href="#copy"/></svg><i class="caret"></i></button><button aria-label="Format Painter"><svg class="i24"><use href="#brush"/></svg></button></div></div><h3>Clipboard</h3></div>
    <div class="group g-font"><div class="tools col"><div class="row combos"><select class="face" aria-label="Font"><option>Calibri</option></select><select class="size" aria-label="Font size"><option>11</option></select></div>
      <div class="row"><button class="fmt b">B</button><button class="fmt it">I</button><button class="fmt u">U</button><span class="bar"></span><button class="color" aria-label="Background color"><svg class="i26"><use href="#fill"/></svg><i class="caret"></i></button><button class="color" aria-label="Font color"><svg class="i26"><use href="#fontcolor"/><text class="glyph" x="13" y="18">A</text></svg><i class="caret"></i></button></div></div><h3>Font</h3><button class="launcher" aria-label="Font dialog"><svg class="i12"><use href="#launch"/></svg></button></div>
    <div class="group g-sched"><div class="tools"><div class="col"><div class="row combos">
      <button class="pct" disabled><svg><use href="#pct"/></svg>0%</button><button class="pct" disabled><svg><use href="#pct"/><path class="prog" d="M2 6h6"/></svg>25%</button><button class="pct" disabled><svg><use href="#pct"/><path class="prog" d="M2 6h12"/></svg>50%</button><button class="pct" disabled><svg><use href="#pct"/><path class="prog" d="M2 6h17"/></svg>75%</button><button class="pct" disabled><svg><use href="#pct"/><path class="prog" d="M1 6h22"/></svg>100%</button></div>
      <div class="row icons"><button disabled aria-label="Outdent"><svg class="i26"><use href="#outdent"/></svg></button><button disabled aria-label="Indent"><svg class="i26"><use href="#indent"/></svg></button><span class="bar"></span><button disabled aria-label="Split Task"><svg class="i26"><use href="#split"/></svg></button><span class="bar"></span><button disabled aria-label="Link"><svg class="i24"><use href="#link"/></svg></button><button disabled aria-label="Unlink"><svg class="i26"><use href="#unlink"/></svg></button></div></div>
      <div class="stack wide"><button><svg class="i24"><use href="#track"/></svg>Mark on Track<i class="caret"></i></button><button disabled><svg class="i24"><use href="#respect"/></svg>Respect Links</button><button disabled><svg class="i24"><use href="#inactive"/></svg>Inactivate</button></div></div><h3>Schedule</h3></div>
    <div class="group g-tasks"><div class="tools"><button class="big" disabled><span class="pic"><svg class="w36"><use href="#pin"/></svg></span><span>Manually<br>Schedule</span></button><button class="big" disabled><span class="pic"><svg class="w48"><use href="#auto"/></svg></span><span>Auto<br>Schedule</span></button><span class="bar tall"></span>
      <div class="stack wide"><button disabled><svg class="i24"><use href="#inspect"/><text class="mark" x="13" y="18">?</text></svg>Inspect<i class="caret"></i></button><button disabled><svg class="i24"><use href="#move"/></svg>Move<i class="caret"></i></button><button><svg class="i24"><use href="#mode"/><text class="mark large" x="16" y="23">?</text></svg>Mode<i class="caret"></i></button></div></div><h3>Tasks</h3></div>
    <div class="group g-insert"><div class="tools"><button class="big"><span class="pic"><svg class="w42 grey"><use href="#newtask"/></svg></span><span>Task</span><i class="caret"></i></button>
      <div class="stack"><button disabled aria-label="Summary"><svg class="i26"><use href="#summary"/></svg></button><button disabled aria-label="Milestone"><svg class="i26"><use href="#milestone"/></svg></button><button disabled aria-label="Deliverable"><svg class="i26"><use href="#deliver"/></svg><i class="caret"></i></button></div></div><h3>Insert</h3></div>
    <div class="group g-prop"><div class="tools"><button class="big" disabled><span class="pic"><svg class="w48"><use href="#info"/></svg></span><span>Information</span></button>
      <div class="stack"><button disabled aria-label="Notes"><svg class="i24"><use href="#note"/></svg></button><button aria-label="Details"><svg class="i24"><use href="#details"/></svg></button><button disabled aria-label="Add to Timeline"><svg class="i24"><use href="#timeline"/></svg></button></div></div><h3>Properties</h3></div>
    <div class="group g-edit"><div class="tools"><button class="big" disabled><span class="pic"><svg class="w42"><use href="#scroll"/></svg></span><span>Scroll<br>to Task</span></button>
      <div class="stack"><button aria-label="Find"><svg class="i24"><use href="#find"/></svg><i class="caret"></i></button><button aria-label="Clear"><svg class="i24"><use href="#erase"/></svg><i class="caret"></i></button><button aria-label="Fill"><svg class="i24"><use href="#down"/></svg><i class="caret"></i></button></div></div><h3>Editing</h3></div>
  </div>
  <div class="band"></div>
  <div class="work sheet-work">
    <div class="side"><span>Resource Sheet</span></div>
    <div class="pane">
      <table class="resources">
        <colgroup><col class="c63"><col class="c68"><col><col class="c121"><col class="c142"><col class="c121"><col class="c111"><col class="c111"><col class="c121"><col class="c121"><col class="c121"><col class="c111"><col class="c61"></colgroup>
        <thead><tr><th></th><th class="mid"><svg class="i24"><use href="#disc"/><text class="mark white" x="12" y="18">i</text></svg></th><th class="sel"><div>Resource Name<i class="caret navy"></i></div></th><th><div>Type<i class="caret navy"></i></div></th><th><div>Material<i class="caret navy"></i></div></th><th><div>Initials<i class="caret navy"></i></div></th><th><div>Group<i class="caret navy"></i></div></th><th><div>Max.<i class="caret navy"></i></div></th><th><div>Std. Rate<i class="caret navy"></i></div></th><th><div>Ovt. Rate<i class="caret navy"></i></div></th><th><div>Cost/Use<i class="caret navy"></i></div></th><th><div>Accrue At<i class="caret navy"></i></div></th><th><div>Base Calendar</div></th></tr></thead>
        <tbody>
        <tr class="first"><th class="sel">1<td><td class="active">Mandor<td>Work<td><td>M<td><td class="num">100%<td class="num">Rp0/hr<td class="num">Rp0/hr<td class="num">Rp0<td>Prorated<td>Standard</tr>
        <tr><th><td><td><td><td><td><td><td><td><td><td><td><td></tr>
        <tr><th><td><td><td><td><td><td><td><td><td><td><td><td></tr>
        <tr><th><td><td><td><td><td><td><td><td><td><td><td><td></tr>
        <tr><th><td><td><td><td><td><td><td><td><td><td><td><td></tr>
        <tr><th><td><td><td><td><td><td><td><td><td><td><td><td></tr>
        <tr><th><td><td><td><td><td><td><td><td><td><td><td><td></tr>
        <tr><th><td><td><td><td><td><td><td><td><td><td><td><td></tr>
        <tr><th><td><td><td><td><td><td><td><td><td><td><td><td></tr>
        <tr><th><td><td><td><td><td><td><td><td><td><td><td><td></tr>
        <tr><th><td><td><td><td><td><td><td><td><td><td><td><td></tr>
        <tr><th><td><td><td><td><td><td><td><td><td><td><td><td></tr>
        <tr><th><td><td><td><td><td><td><td><td><td><td><td><td></tr>
        <tr><th><td><td><td><td><td><td><td><td><td><td><td><td></tr>
        <tr><th><td><td><td><td><td><td><td><td><td><td><td><td></tr>
        <tr><th><td><td><td><td><td><td><td><td><td><td><td><td></tr>
        <tr><th><td><td><td><td><td><td><td><td><td><td><td><td></tr>
        <tr><th><td><td><td><td><td><td><td><td><td><td><td><td></tr>
        </tbody>
      </table>
    </div>
    <div class="vscroll"><i class="tri up"></i><i class="thumb v"></i><i class="tri dn"></i><i class="knob"></i></div>
    <div class="hscroll left"><i class="tri lf"></i><i class="thumb h"></i><i class="tri rt"></i></div>
    <div class="corner"></div>
  </div>
  <div class="edge"></div>
  <footer class="status"><span class="ready">Ready</span><span class="newtasks"><svg class="i22"><use href="#pin"/></svg>New Tasks : Manually Scheduled<span class="rule"></span></span><span class="views"><button aria-label="Gantt view"><svg class="i20"><use href="#v1"/></svg></button><button aria-label="Usage view"><svg class="i20"><use href="#v2"/></svg></button><button aria-label="Planner view"><svg class="i20"><use href="#v3"/></svg></button><button class="on" aria-label="Sheet view"><svg class="i20"><use href="#v4"/></svg></button></span><span class="zoom"><button class="round" disabled aria-label="Zoom out">−</button><input type="range" aria-label="Zoom" disabled><button class="round" disabled aria-label="Zoom in">+</button></span></footer>
  <div class="taskbar">
    <button class="start" aria-label="Start"><svg><use href="#orbi"/></svg></button><span class="grip"></span>
    <div class="apps"><button aria-label="OneNote"><svg class="i24 purple"><use href="#frame"/><text class="letter" x="12" y="19">N</text></svg></button><button aria-label="Word"><svg class="i24 blue"><use href="#frame"/><text class="letter" x="12" y="19">W</text></svg></button><button aria-label="Firefox"><svg class="i26"><use href="#fox"/></svg></button><button aria-label="Explorer"><svg class="i26"><use href="#folder"/></svg></button><button class="cur" aria-label="Project"><svg class="i24 green"><use href="#frame"/><text class="letter" x="12" y="19">P</text></svg></button><button aria-label="PowerPoint"><svg class="i24 orange"><use href="#frame"/><text class="letter" x="12" y="19">P</text></svg></button><button aria-label="Viewer"><svg class="i24"><use href="#swoosh"/></svg></button><button aria-label="Help"><svg class="i24"><use href="#disc"/><text class="mark white" x="12" y="18">?</text></svg></button></div>
    <div class="tray"><span class="grip"></span><span class="lang">IN</span><i class="tri up white"></i><span class="meter">441</span><svg class="i26"><use href="#signal"/></svg><svg class="i26"><use href="#flag"/></svg><svg class="i24"><use href="#sound"/></svg><svg class="i26"><use href="#battery"/></svg><time>21:20</time><button class="peek" aria-label="Show desktop"></button></div>
  </div>
</section>

<footer class="pagefoot"><span class="word">Halaman</span><span>| 30</span></footer>
</main>
</body>
</html>
```
FILE: styles.css
```css
* { box-sizing: border-box; }
body { margin: 0; background: #fff; color: #000; font-family: Lato, sans-serif; font-variant-ligatures: none; }
.sprite { position: absolute; width: 0; height: 0; }
.page { padding: 236px 240px 160px 248px; }
.text { margin: 0; font-size: 36px; line-height: 69px; }
.second { margin-top: 82px; }
.window { margin: 15px 0 0 3px; border: 2px solid #000; position: relative; font: 16px/20px "Open Sans", sans-serif; color: #1e395b; background: #bccbe0; }
button { margin: 0; padding: 0; border: 0; background: none; font: inherit; color: inherit; display: flex; align-items: center; }
h2, h3, h4 { margin: 0; font: inherit; }
svg { flex: none; }
button svg, th svg { overflow: visible; }
.i12 { width: 12px; height: 12px; }
.i14 { width: 14px; height: 14px; }
.i18 { width: 18px; height: 18px; }
.i20 { width: 20px; height: 20px; }
.i22 { width: 22px; height: 22px; }
.i24 { width: 24px; height: 24px; }
.i26 { width: 26px; height: 26px; }
.w36 { width: 36px; height: 38px; }
.w42 { width: 42px; height: 46px; }
.w48 { width: 48px; height: 44px; }
.letter { font: bold 19px "Liberation Serif", serif; text-anchor: middle; fill: currentColor; }
.mark { font: bold 15px "Open Sans", sans-serif; text-anchor: middle; fill: #1a1a1a; }
.mark.white { fill: #fff; font-size: 17px; }
.mark.large { font-size: 21px; }
.glyph { font: bold 24px "Liberation Serif", serif; text-anchor: middle; fill: #2b4f95; }
.green { color: #4f8f12; }
.purple { color: #8a1f86; }
.blue { color: #2263c0; }
.orange { color: #d8501c; }
.bar { width: 1px; height: 22px; background: #8496b0; flex: none; }
.caret { width: 0; height: 0; flex: none; display: inline-block; border: 5px solid transparent; border-top: 6px solid #5b677a; border-bottom: 0; }
.caret.black { border-top-color: #000; }
.caret.faint { border-top-color: #94a5bd; }
.caret.navy { border-width: 7px 6px 0; border-top-color: #17305a; }

.top { display: grid; grid-template: 36px 35px / 459px auto 1fr; background: linear-gradient(#c0d5ea, #b9cae4); border-bottom: 1px solid #98abc8; }
.quick { display: flex; align-items: center; padding: 0 0 4px 2px; }
.quick .bar { margin: 0 11px 0 7px; }
.quick .pair { gap: 7px; margin-left: 12px; }
.quick .pair + .bar { margin: 0 8px 0 8px; }
.more { border-top: 2px solid #000; padding-top: 4px; }
.tabs { grid-row: 2; grid-column: 1; display: flex; }
.tab, .file { justify-content: center; }
.file { width: 84px; margin-right: 7px; color: #fff; background: linear-gradient(#2f7d1c, #3a8a1c 60%, #63b032); border: 1px solid #2b6a1c; border-bottom: 0; border-radius: 4px 4px 0 0; }
.tabs .on { width: 71px; background: linear-gradient(#fff, #f1f6fc); border-radius: 4px 4px 0 0; }
.res { width: 120px; }
.prj { width: 90px; }
.vw { width: 84px; }
.context { grid-column: 2; grid-row: 1 / 3; display: grid; grid-template-rows: 36px 35px; justify-items: center; align-items: center; padding: 0 10px; border-top: 5px solid; color: #1e395b; }
.context b { font-weight: 600; color: #fff; margin-top: -9px; }
.context .tab { margin-top: -9px; }
.purple-tab { border-color: #7b2fd0; background: linear-gradient(#9c7ed8, #bcb2e4 60%, #b9cae4); }
.orange-tab { border-color: #f7941d; background: linear-gradient(#dfa478, #ddb698 55%, #b9cae4); }
.title { display: flex; justify-content: space-between; padding-left: 18px; }
.title h2 { font-size: 17px; line-height: 35px; }
.wincon { display: flex; gap: 35px; padding: 0 17px 3px 0; }
.doccon { display: flex; justify-content: flex-end; gap: 12px; padding: 0 7px 1px 0; }

.ribbon { display: flex; height: 129px; background: linear-gradient(#f1f6fd, #e1ebf7 50%, #d5e2f2); font-size: 17px; }
.group { position: relative; flex: none; border-right: 1px solid #98abc8; box-shadow: 1px 0 #f4f8fd; }
.group h3 { text-align: center; color: #4a5c80; line-height: 18px; }
.tools { display: flex; height: 109px; padding: 3px 6px 0; }
.col { display: flex; flex-direction: column; gap: 12px; }
.row { display: flex; align-items: center; height: 33px; }
.combos { margin-top: 12px; height: 32px; }
.g-view { width: 75px; }
.g-clip { width: 126px; }
.g-font { width: 233px; }
.g-sched { width: 377px; }
.g-tasks { width: 297px; }
.g-insert { width: 123px; }
.g-prop { width: 147px; }
.g-edit { width: 126px; }
.big { flex-direction: column; height: 99px; width: 62px; border: 1px solid transparent; border-radius: 4px; text-align: center; white-space: nowrap; font-size: 16px; }
.big .caret { margin-top: 6px; }
.big span .caret { margin: 0 0 3px 4px; }
.pic { height: 57px; display: flex; align-items: center; justify-content: center; align-self: stretch; }
.big.on { background: linear-gradient(#fcd98a, #fdd05a 60%, #fef08c); border-color: #c59438; }
.split-btn .pic { border-bottom: 1px solid #dca648; }
.g-clip .tools { padding-left: 8px; }
.g-clip .big { margin-right: 6px; }
.g-tasks .tools { padding-left: 9px; }
.g-tasks .big { width: 78px; }
.g-insert .tools { padding-left: 14px; gap: 6px; }
.g-insert .big { width: 56px; }
.g-prop .big { width: 106px; }
.g-edit .big { width: 70px; }
.stack button { height: 33px; gap: 5px; white-space: nowrap; }
.stack.wide .caret { margin-left: 4px; }
.bar.tall { height: 88px; margin: 4px 11px 0 8px; background: #b9c8de; }
.g-font .tools { padding-left: 8px; }
select { appearance: none; border: 1px solid #a6b8d4; height: 32px; padding: 0 5px; font: 17px "Open Sans", sans-serif; color: #000; border-radius: 0;
  background: linear-gradient(45deg, transparent 50%, #5b677a 50%) right 10px center / 5px 5px no-repeat, linear-gradient(-45deg, transparent 50%, #5b677a 50%) right 5px center / 5px 5px no-repeat, #f3f8fd; }
.face { width: 145px; }
.size { width: 75px; }
.fmt { justify-content: center; height: 33px; font: bold 22px "Liberation Serif", serif; color: #111; }
.b { width: 36px; border-radius: 4px; }
.b.on { background: linear-gradient(#fcd46e, #fee58a); border: 1px solid #c59438; }
.it { width: 34px; font-style: italic; }
.u { width: 40px; text-decoration: underline; }
.g-font .row .bar { height: 30px; margin: 0 12px 0 4px; background: #b9c8de; }
.color { width: 50px; gap: 6px; }
.launcher { position: absolute; right: 7px; bottom: 5px; }
.g-sched .tools { padding-left: 9px; gap: 3px; }
.pct { flex-direction: column; width: 36px; font: 500 13px/14px Roboto, sans-serif; color: #000; }
.pct svg { width: 24px; height: 12px; }
.prog { stroke: #141c2c; stroke-width: 4; }
.icons button { width: 34px; justify-content: center; }
.icons .bar { height: 30px; margin: 0 8px 0 7px; background: #b9c8de; }
button:disabled { color: #96a0b0; }
button:disabled svg, .grey { filter: grayscale(1); opacity: .5; }
button:disabled .caret { opacity: .5; }

.band { height: 8px; background: #bccbe0; border-top: 2px solid #8fa4c0; border-bottom: 1px solid #9aa8bc; }
.work { display: grid; grid-template-rows: 593px 26px; }
.gantt-work { grid-template-columns: 34px minmax(0, 3fr) 9px minmax(0, 1fr) 28px; }
.sheet-work { grid-template-columns: 34px minmax(0, 1fr) 28px; }
.side { grid-row: 1 / 3; background: #1c3a60; color: #fff; display: flex; align-items: center; justify-content: center; font-size: 17px; }
.side span { writing-mode: vertical-rl; transform: rotate(180deg); }
.pane { overflow: hidden; background: #fff; }
table { width: 100%; table-layout: fixed; border-collapse: separate; border-spacing: 0; }
.c61 { width: 61px; } .c63 { width: 64px; } .c68 { width: 67px; } .c88 { width: 89px; } .c111 { width: 111px; }
.c119 { width: 119px; } .c121 { width: 121px; } .c142 { width: 142px; }
td, th { padding: 0 0 1px 4px; height: 32px; border-right: 1px solid #d6d6de; border-bottom: 1px solid #d0d0d8; text-align: left; font: 20px/24px Lato, sans-serif; color: #000; white-space: nowrap; overflow: hidden; }
th { background: #dbe7f5; border-color: #9fb2cc; font: 17px/24px "Open Sans", sans-serif; color: #2a4368; }
tbody th { text-align: center; padding: 0; }
th div { display: flex; justify-content: space-between; align-items: center; }
.tasks thead th { height: 46px; vertical-align: top; padding-top: 4px; }
.tasks thead div { padding-right: 10px; }
.tasks thead .caret { margin-top: 14px; }
.tasks thead th:last-child div { padding: 0; }
.tasks tbody td:nth-child(4) { padding-left: 50px; font-size: 21px; }
.tasks tbody .sum td { font-weight: 700; }
.tasks tbody .sum td:nth-child(4) { padding-left: 6px; }
tbody .first td { border-bottom-color: #6a6a70; }
.tog { display: inline-block; width: 14px; height: 14px; margin-right: 7px; vertical-align: 5px; border: 1px solid #a8b0bc; background: linear-gradient(#000, #000) center / 8px 2px no-repeat #fff; }
.ch { background: #e6f0fc; }
.modecell svg { display: block; margin: 8px 0 0 6px; }
.resources thead th { height: 28px; padding: 2px 0 0 4px; }
.resources thead div { padding-right: 8px; }
.resources thead .mid { padding: 0; }
.mid svg { display: block; margin: auto; }
th.sel { background: linear-gradient(#ffd85e, #f8cf52); border-color: #c8a03c; }
.resources .active { outline: 3px solid #000; outline-offset: -2px; padding-left: 25px; }
.resources .num { text-align: right; padding-right: 4px; }
.splitter { background: #dce6f2; border: 1px solid #8d9db4; border-width: 0 2px; }
.chart { display: flex; flex-direction: column; overflow: hidden; background: #fff; color: #35507c; }
.weeks, .days { display: grid; height: 23px; background: #dbe7f5; flex: none; line-height: 22px; }
.weeks { grid-template-columns: 241fr 573fr 298fr; font-size: 18px; }
.days { grid-template-columns: 78fr repeat(12, 82fr) 52fr; text-align: center; font-size: 17px; }
.weeks span, .days span { border: 1px solid #8d99ac; border-width: 0 1px 1px 0; white-space: nowrap; overflow: hidden; min-width: 0; }
.weeks span { padding-left: 6px; }
.bars { width: 100%; flex: 1; min-height: 0; }
.vscroll { background: linear-gradient(90deg, #a9c0df, #bcd0e8); display: flex; flex-direction: column; align-items: center; padding: 9px 3px 2px 0; }
.tri { width: 0; height: 0; border: 7px solid transparent; flex: none; }
.tri.up { border-top: 0; border-bottom: 8px solid #55657f; }
.tri.dn { border-bottom: 0; border-top: 8px solid #3f5273; margin-top: auto; }
.tri.lf { border-left: 0; border-right: 8px solid #4d5f7c; }
.tri.rt { border-right: 0; border-left: 8px solid #4d5f7c; margin-left: auto; }
.tri.white { border-bottom-color: #fff; }
.thumb { border: 2px solid #6f88ae; border-radius: 3px; }
.thumb.v { width: 24px; height: 25px; margin-top: 8px; background: repeating-linear-gradient(#6880a6 0 1px, #c4d6ee 1px 4px) center / 12px 13px no-repeat #bcd0ea; }
.thumb.h { width: 26px; height: 24px; margin-left: 10px; background: repeating-linear-gradient(90deg, #6880a6 0 1px, #c4d6ee 1px 4px) center / 13px 12px no-repeat #bcd0ea; }
.knob { width: 24px; height: 11px; background: #eef3fa; border: 1px solid #8798b2; margin-top: 9px; }
.hscroll { background: linear-gradient(#a4bcda, #bccfe6); display: flex; align-items: center; padding: 0 8px 0 9px; }
.hscroll.left { grid-column: 2; }
.corner { background: #6f94cb; }
.corner::after { content: ""; display: block; height: 100%; background: radial-gradient(circle, #e4eefb 1px, transparent 2px) 4px 2px / 6px 6px; clip-path: polygon(90% 15%, 90% 100%, 15% 100%); }

.menu { position: absolute; left: 7px; top: 173px; width: 215px; background: #fff; border: 1px solid #8d96a4; border-radius: 3px; box-shadow: 4px 4px 5px #0006; }
.menu h4 { height: 33px; line-height: 33px; padding-left: 12px; font-weight: 600; background: #eff1f5; }
.list { height: 474px; display: flex; flex-direction: column; background: linear-gradient(#dfe2e8, #dfe2e8) 38px 0 / 1px 100% no-repeat; }
.list button { flex: 1; position: relative; margin: 0 3px; padding: 0 0 1px 47px; border: 1px solid transparent; border-radius: 3px; }
.list .hot { background: linear-gradient(#fdf0ae, #fbe08a 50%, #f8d867 55%, #fdf2b4); border-color: #e8c34c; }
.tick { position: absolute; left: 1px; top: 1px; width: 30px; height: 30px; border: 2px solid #eea04a; border-radius: 4px; background: #fcefc0; font: bold 22px/26px "DejaVu Sans", sans-serif; text-align: center; color: #27407c; }
.short { height: 102px; border-top: 2px solid #dfe2e8; }
.short svg { position: absolute; left: 4px; }
.edge { height: 6px; background: linear-gradient(#dce7f4 0 2px, #8fabd0 2px 4px, #eaf1f9 4px); }
.status { display: flex; align-items: center; height: 31px; background: linear-gradient(#d5e1ef, #b4c6dd); line-height: 28px; padding-bottom: 2px; }
.ready { width: 73px; padding-left: 12px; border-right: 1px solid #93a6c2; }
.newtasks { flex: 1; display: flex; align-items: center; gap: 7px; padding-left: 34px; font-size: 17px; }
.rule { width: 1px; height: 29px; margin-left: 4px; background: #93a6c2; }
.views { display: flex; align-items: center; padding-left: 7px; border-left: 1px solid #93a6c2; }
.views button { width: 28px; height: 28px; justify-content: center; }
.views .on { background: #fcd66c; border: 2px solid #d8a52c; border-radius: 4px; }
.zoom { display: flex; align-items: center; padding: 0 5px 0 4px; }
.round { width: 25px; height: 25px; border: 2px solid #6f7f98; border-radius: 50%; background: #eef3f9; justify-content: center; font: bold 22px/20px "Liberation Sans", sans-serif; color: #555; }
.round:disabled { opacity: .45; }
input[type=range] { appearance: none; width: 150px; height: 24px; margin: 0; background: linear-gradient(#7d8fac, #7d8fac) center / 1px 14px no-repeat, linear-gradient(#7d8fac, #7d8fac) center / 100% 2px no-repeat; }
input[type=range]::-webkit-slider-thumb { appearance: none; width: 14px; height: 20px; background: #eef3f9; border: 2px solid #62718a; border-radius: 2px 2px 7px 7px; }
input[type=range]:disabled { opacity: .6; }
input[type=range]:disabled::-webkit-slider-thumb { visibility: hidden; }
.taskbar { display: flex; align-items: center; height: 45px; border-top: 1px solid #3c4c64; background: linear-gradient(90deg, #7f91aa, #8b9fba 7%, #a5bfe0 30%, #a5bfe0 68%, #7d8fa8 72%, #8394ac); }
.start { margin: -6px 0 0 13px; width: 54px; }
.start svg { width: 54px; height: 50px; }
.grip { width: 14px; height: 34px; margin-left: 18px; background: radial-gradient(circle, #2e3a4e 1px, transparent 2px) 0 0 / 5px 6px; }
.apps { display: flex; gap: 5px; margin-left: 15px; }
.apps button { width: 65px; height: 43px; justify-content: center; border: 1px solid #44566e; border-radius: 4px; background: linear-gradient(135deg, #cfdbea, #a3b8d4); box-shadow: inset 0 0 0 1px #e3ebf5; }
.apps .cur { background: linear-gradient(135deg, #f2f6fb, #cfe0ee); }
.tray { display: flex; align-items: center; margin-left: auto; height: 100%; color: #f2f5fa; gap: 11px; }
.lang { margin: -10px 16px 0 5px; }
.tray .white { margin-right: 6px; }
.meter { width: 26px; height: 26px; background: linear-gradient(90deg, #16c816 50%, #fff 50%) 1px 20px / 24px 5px no-repeat, linear-gradient(#fff 18px, #000 18px); color: #000; font: bold 15px/18px "Liberation Sans", sans-serif; text-align: center; }
.tray time { margin: 0 28px 0 36px; font-size: 17px; }
.peek { width: 23px; height: 43px; border: 1px solid #39475a; background: linear-gradient(135deg, #5c6b80, #8a99ae); }

.pagefoot { margin: 295px 0 0 -6px; padding: 0 6px 0 0; border-top: 1px solid #d0d0d0; display: flex; justify-content: flex-end; gap: 20px; font-size: 36px; line-height: 54px; }
.word { color: #7f7f7f; letter-spacing: 10px; }
```
